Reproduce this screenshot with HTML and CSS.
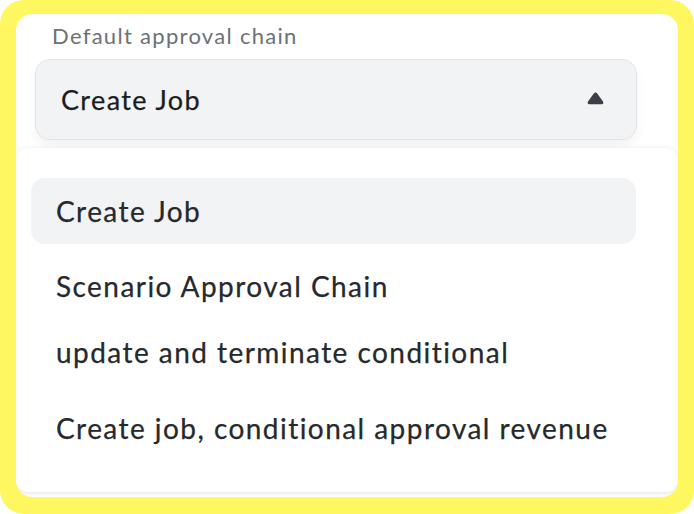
FILE: index.html
```html
<!DOCTYPE html>
<html lang="en">
<head>
<meta charset="utf-8">
<title>Default approval chain</title>
<link rel="stylesheet" href="styles.css">
</head>
<body>
<div class="frame">
  <div class="card">
    <div class="label">Default approval chain</div>
    <div class="select">
      <span class="select-value">Create Job</span>
      <svg class="caret" width="17" height="13" viewBox="0 0 17 13" aria-hidden="true">
        <path d="M6.6 1.7 Q8.5 -0.6 10.4 1.7 L16 9.6 Q17.2 12.2 14.4 12.2 L2.6 12.2 Q-0.2 12.2 1 9.6 Z" fill="#3a3f45"/>
      </svg>
    </div>
    <div class="panel">
      <div class="option active">Create Job</div>
      <div class="option o2">Scenario Approval Chain</div>
      <div class="option o3">update and terminate conditional</div>
      <div class="option o4">Create job, conditional approval revenue</div>
    </div>
  </div>
</div>
</body>
</html>
```
FILE: styles.css
```css
html, body {
  margin: 0;
  padding: 0;
  background: #ffffff;
}
body {
  font-family: "Lato", "Open Sans", sans-serif;
}
.frame {
  width: 694px;
  height: 514px;
  box-sizing: border-box;
  background: #fff75f;
  border-radius: 24px;
  padding: 14px 16px 17px 16px;
}
.card {
  height: 100%;
  background: #ffffff;
  border-radius: 16px;
  overflow: hidden;
  padding-top: 9px;
  box-sizing: border-box;
}
.label {
  font-size: 22px;
  line-height: 26px;
  letter-spacing: 1.3px;
  color: #6c7177;
  padding-left: 36px;
}
.select {
  margin: 10px 0 0 19px;
  width: 602px;
  height: 81px;
  box-sizing: border-box;
  background: #f2f3f5;
  border: 1px solid #e1e3e6;
  border-radius: 15px;
  display: flex;
  align-items: center;
  justify-content: space-between;
  padding: 0 32px 0 25px;
  box-shadow: 0 6px 10px rgba(0, 0, 0, 0.05);
}
.select-value {
  font-size: 27px;
  letter-spacing: 1.4px;
  color: #1a1d21;
  -webkit-text-stroke: 0.25px #1a1d21;
}
.caret {
  display: block;
  margin-top: -2px;
}
.panel {
  margin-top: 8px;
  height: 344px;
  background: #ffffff;
  border-radius: 12px;
  box-shadow: 0 1px 5px rgba(0, 0, 0, 0.12);
  padding: 30px 0 0 15px;
  box-sizing: border-box;
}
.option {
  width: 605px;
  height: 66px;
  box-sizing: border-box;
  border-radius: 14px;
  display: flex;
  align-items: center;
  padding-left: 25px;
  font-size: 28px;
  letter-spacing: 1.45px;
  color: #26292d;
  -webkit-text-stroke: 0.25px #26292d;
}
.option.active {
  background: #f2f3f5;
}
.option.o2 {
  margin-top: 9px;
}
.option.o4 {
  margin-top: 10px;
}
```
